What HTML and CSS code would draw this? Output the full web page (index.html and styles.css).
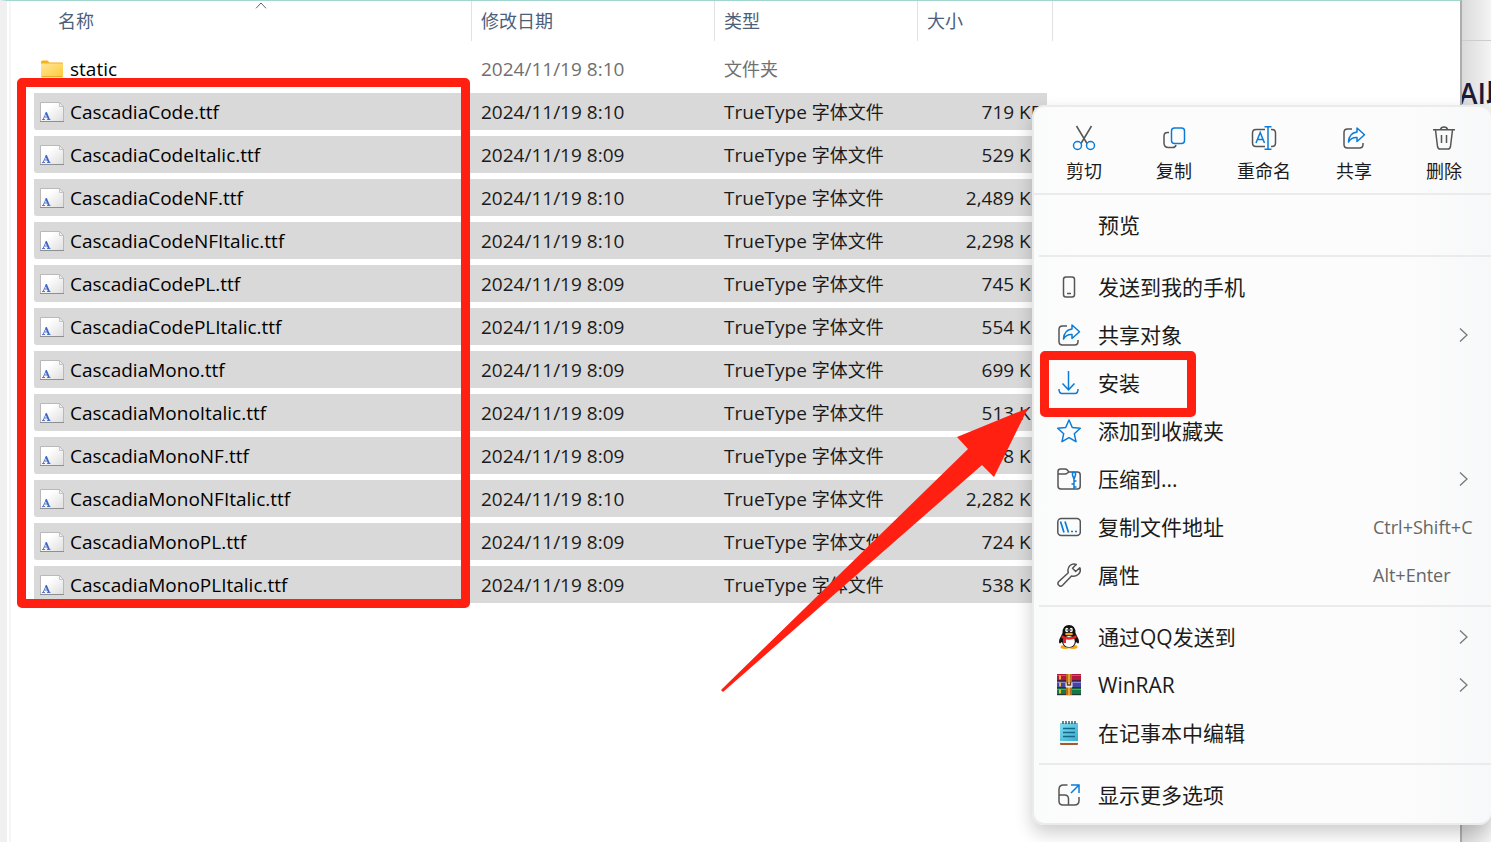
FILE: index.html
```
<!DOCTYPE html>
<html lang="zh-CN">
<head>
<meta charset="utf-8">
<title>CascadiaCode</title>
<link rel="stylesheet" href="styles.css">
</head>
<body>
<svg class="sprite" aria-hidden="true">
  <defs>
    <linearGradient id="page" x1="0" y1="0" x2="1" y2="1"><stop offset=".3" stop-color="#fff"/><stop offset="1" stop-color="#dedede"/></linearGradient>
    <linearGradient id="gold" x1="0" y1="0" x2="1" y2="1"><stop offset="0" stop-color="#ffe69a"/><stop offset="1" stop-color="#ffca3a"/></linearGradient>
    <linearGradient id="note" x1="0" y1="0" x2="1" y2="1"><stop offset="0" stop-color="#7fdcf0"/><stop offset="1" stop-color="#3bacc9"/></linearGradient>
  </defs>
  <symbol id="ttf" viewBox="0 0 24 20">
    <path d="M.5.5H19.500L23.500 4.500V19.500H.5Z" fill="url(#page)" stroke="#b9b9b9"/>
    <path d="M19.500.5V4.500H23.500Z" fill="#eee" stroke="#b9b9b9" stroke-width=".8"/>
    <path d="M0 19.500H24" stroke="#8f8f8f"/>
    <path d="M2 17.500H5M7 17.500H10.500M3.200 17.200L6.300 10.500M4.300 15H7.500" stroke="#5b7fd0" stroke-width="1" fill="none"/>
    <path d="M6 10.300L9 17.500" stroke="#3a62c4" stroke-width="1.800"/>
  </symbol>
  <symbol id="share" viewBox="0 0 24 24">
    <path d="M10 3H5.500Q2 3 2 6.500V18.500Q2 22 5.500 22H17.500Q21 22 21 18.500V17" fill="none" stroke="#555" stroke-width="1.500"/>
    <path d="M15 2L22.500 8.700L15 15.500V11.500Q9.500 11 6.500 16Q7 7 15 6Z" fill="none" stroke="#0a7bd8" stroke-width="1.500" stroke-linejoin="round"/>
  </symbol>
  <symbol id="chevron" viewBox="0 0 9 16"><path d="M1 1.500L8 8L1 14.500" fill="none" stroke="#777" stroke-width="1.300"/></symbol>
</svg>

<div class="desktop">
  <main class="explorer">
    <div class="listing">
      <table class="files">
        <colgroup><col class="c-name"><col class="c-date"><col class="c-type"><col class="c-size"><col class="c-end"></colgroup>
        <thead>
          <tr>
            <th><button class="head head-name" type="button">名称
              <svg class="sort" width="12" height="7" viewBox="0 0 12 7" aria-hidden="true"><path d="M1 6.300L6 1L11 6.300" fill="none" stroke="#666"/></svg>
            </button></th>
            <th><button class="head" type="button">修改日期</button></th>
            <th><button class="head" type="button">类型</button></th>
            <th colspan="2"><button class="head" type="button">大小</button></th>
          </tr>
        </thead>
        <tbody>
          <tr class="folder"><td><span class="file"><svg width="24" height="18" viewBox="0 0 24 18" aria-hidden="true"><path d="M1 2Q1 .5 2.500.5H7.500L9.500 2.500H22Q23 2.500 23 3.500V8H1Z" fill="#f4b21b"/><path d="M1 3.500H23V16Q23 17 22 17H2Q1 17 1 16Z" fill="url(#gold)"/><path d="M1.500 16.800H22.500" stroke="#dda018"/></svg>static</span></td><td>2024/11/19 8:10</td><td>文件夹</td><td></td><td></td></tr>
          <tr class="on"><td><span class="file"><svg width="24" height="20" aria-hidden="true"><use href="#ttf"/></svg>CascadiaCode.ttf</span></td><td>2024/11/19 8:10</td><td>TrueType <span class="cjk">字体文件</span></td><td class="size">719 KB</td><td></td></tr>
          <tr class="on"><td><span class="file"><svg width="24" height="20" aria-hidden="true"><use href="#ttf"/></svg>CascadiaCodeItalic.ttf</span></td><td>2024/11/19 8:09</td><td>TrueType <span class="cjk">字体文件</span></td><td class="size">529 KB</td><td></td></tr>
          <tr class="on"><td><span class="file"><svg width="24" height="20" aria-hidden="true"><use href="#ttf"/></svg>CascadiaCodeNF.ttf</span></td><td>2024/11/19 8:10</td><td>TrueType <span class="cjk">字体文件</span></td><td class="size">2,489 KB</td><td></td></tr>
          <tr class="on"><td><span class="file"><svg width="24" height="20" aria-hidden="true"><use href="#ttf"/></svg>CascadiaCodeNFItalic.ttf</span></td><td>2024/11/19 8:10</td><td>TrueType <span class="cjk">字体文件</span></td><td class="size">2,298 KB</td><td></td></tr>
          <tr class="on"><td><span class="file"><svg width="24" height="20" aria-hidden="true"><use href="#ttf"/></svg>CascadiaCodePL.ttf</span></td><td>2024/11/19 8:09</td><td>TrueType <span class="cjk">字体文件</span></td><td class="size">745 KB</td><td></td></tr>
          <tr class="on"><td><span class="file"><svg width="24" height="20" aria-hidden="true"><use href="#ttf"/></svg>CascadiaCodePLItalic.ttf</span></td><td>2024/11/19 8:09</td><td>TrueType <span class="cjk">字体文件</span></td><td class="size">554 KB</td><td></td></tr>
          <tr class="on"><td><span class="file"><svg width="24" height="20" aria-hidden="true"><use href="#ttf"/></svg>CascadiaMono.ttf</span></td><td>2024/11/19 8:09</td><td>TrueType <span class="cjk">字体文件</span></td><td class="size">699 KB</td><td></td></tr>
          <tr class="on"><td><span class="file"><svg width="24" height="20" aria-hidden="true"><use href="#ttf"/></svg>CascadiaMonoItalic.ttf</span></td><td>2024/11/19 8:09</td><td>TrueType <span class="cjk">字体文件</span></td><td class="size">513 KB</td><td></td></tr>
          <tr class="on"><td><span class="file"><svg width="24" height="20" aria-hidden="true"><use href="#ttf"/></svg>CascadiaMonoNF.ttf</span></td><td>2024/11/19 8:09</td><td>TrueType <span class="cjk">字体文件</span></td><td class="size">8 KB</td><td></td></tr>
          <tr class="on"><td><span class="file"><svg width="24" height="20" aria-hidden="true"><use href="#ttf"/></svg>CascadiaMonoNFItalic.ttf</span></td><td>2024/11/19 8:10</td><td>TrueType <span class="cjk">字体文件</span></td><td class="size">2,282 KB</td><td></td></tr>
          <tr class="on"><td><span class="file"><svg width="24" height="20" aria-hidden="true"><use href="#ttf"/></svg>CascadiaMonoPL.ttf</span></td><td>2024/11/19 8:09</td><td>TrueType <span class="cjk">字体文件</span></td><td class="size">724 KB</td><td></td></tr>
          <tr class="on"><td><span class="file"><svg width="24" height="20" aria-hidden="true"><use href="#ttf"/></svg>CascadiaMonoPLItalic.ttf</span></td><td>2024/11/19 8:09</td><td>TrueType <span class="cjk">字体文件</span></td><td class="size">538 KB</td><td></td></tr>
        </tbody>
      </table>
      <div class="mark mark-files"></div>
    </div>
  </main>
  <aside class="behind">
    <div class="behind-bar"></div>
    <div class="behind-title">AI助</div>
  </aside>

  <div class="menu">
    <div class="tools">
      <button class="tool" type="button"><svg width="24" height="26" viewBox="0 0 24 26" fill="none" stroke-width="1.500" aria-hidden="true"><path d="M4.500 1L15 18.500M19.500 1L9 18.500" stroke="#555"/><circle cx="5.500" cy="20.500" r="4" stroke="#0a7bd8"/><circle cx="18.500" cy="20.500" r="4" stroke="#0a7bd8"/></svg>剪切</button>
      <button class="tool" type="button"><svg width="24" height="26" viewBox="0 0 24 26" fill="none" stroke-width="1.500" aria-hidden="true"><path d="M7 7.500H5.500Q2 7.500 2 11V18Q2 22.500 6.500 22.500H10.500Q13.500 22.500 14 20" stroke="#555"/><rect x="9.500" y="3" width="13" height="15.500" rx="3" stroke="#0a7bd8"/></svg>复制</button>
      <button class="tool" type="button"><svg width="26" height="26" viewBox="0 0 26 26" fill="none" stroke-width="1.500" aria-hidden="true"><path d="M14 4.500H5Q1.500 4.500 1.500 8V18Q1.500 21.500 5 21.500H14M20 4.500H21Q24.500 4.500 24.500 8V18Q24.500 21.500 21 21.500H20" stroke="#555"/><path d="M5 18L9.200 7.500L13.500 18M6.500 14.500H12M17 2V24M13.500 1.800H20.500M13.500 24.200H20.500" stroke="#0a7bd8"/></svg>重命名</button>
      <button class="tool" type="button"><svg width="24" height="26" aria-hidden="true"><use href="#share"/></svg>共享</button>
      <button class="tool" type="button"><svg width="24" height="26" viewBox="0 0 24 26" fill="none" stroke="#555" stroke-width="1.500" aria-hidden="true"><path d="M1 4.800H23M3.500 5L5.500 21.500Q6 24 8 24H16Q18 24 18.500 21.500L20.500 5M8.500 4.500Q9 2 12 2T15.500 4.500M9.500 10V18M14.500 10V18"/></svg>删除</button>
    </div>
    <hr class="rule rule-tools">
    <button class="item" type="button"><span class="icon"></span><span class="label">预览</span></button>
    <hr class="rule">
    <button class="item" type="button"><svg class="icon" viewBox="0 0 24 24" fill="none" stroke="#555" stroke-width="1.500" aria-hidden="true"><rect x="6.500" y="2" width="11" height="20" rx="2.500"/><path d="M10 18.500H14"/></svg><span class="label">发送到我的手机</span></button>
    <button class="item" type="button"><svg class="icon" aria-hidden="true"><use href="#share"/></svg><span class="label">共享对象</span><svg class="more" width="9" height="16" aria-hidden="true"><use href="#chevron"/></svg></button>
    <button class="item" type="button"><svg class="icon" viewBox="0 0 24 24" fill="none" stroke="#0a7bd8" stroke-width="1.500" aria-hidden="true"><path d="M11.500 0V18.500M5.500 12.500L11.500 18.800L17.500 12.500M2 18Q2 22.500 5 22.500H18Q21 22.500 21 18"/></svg><span class="label">安装</span><span class="mark mark-install"></span></button>
    <button class="item" type="button"><svg class="icon" viewBox="0 0 24 24" fill="none" stroke="#0a7bd8" stroke-width="1.500" stroke-linejoin="round" aria-hidden="true"><path d="M12 1L15.300 8.500L23.300 9.300L17.300 14.700L19 22.700L12 18.600L5 22.700L6.700 14.700L.7 9.300L8.700 8.500Z"/></svg><span class="label">添加到收藏夹</span></button>
    <button class="item" type="button"><svg class="icon" viewBox="0 0 24 24" fill="none" stroke="#555" stroke-width="1.500" aria-hidden="true"><path d="M1 7V4.500Q1 2 3.500 2H8Q9.500 2 10.500 3.200L12 5H20.500Q23.200 5 23.200 8V19Q23.200 22 20.500 22H4Q1 22 1 19ZM1 7H8Q9.500 7 10.500 6L12 5"/><path d="M17 22V12M17 14H19.500M14.500 17H17M17 20H19.500M15.500 5.500V8L17 12L18.500 8V5.500Z" stroke="#0a7bd8"/></svg><span class="label">压缩到...</span><svg class="more" width="9" height="16" aria-hidden="true"><use href="#chevron"/></svg></button>
    <button class="item" type="button"><svg class="icon" viewBox="0 0 24 24" fill="none" stroke-width="1.500" aria-hidden="true"><rect x=".8" y="3.500" width="22.500" height="17" rx="3.500" stroke="#555"/><path d="M3.500 6.500L7 17.500M8 6.500L11.500 17.500M14 16.500H16M18 16.500H20" stroke="#0a7bd8" stroke-width="1.700"/></svg><span class="label">复制文件地址</span><span class="keys">Ctrl+Shift+C</span></button>
    <button class="item" type="button"><svg class="icon" viewBox="0 0 24 24" fill="none" stroke="#555" stroke-width="1.500" stroke-linejoin="round" aria-hidden="true"><path d="M19.300 1.500Q16 0 13 2.500Q10 5.500 11.300 9.700L1.800 18.500Q0 20.500 1.800 22.300Q3.700 24.200 5.600 22.300L14.500 12.900Q18.800 14 21.700 11Q24.300 8 22.800 4.700L18.700 8.500L15.500 5.300Z"/></svg><span class="label">属性</span><span class="keys">Alt+Enter</span></button>
    <hr class="rule">
    <button class="item" type="button"><svg class="icon" viewBox="0 0 24 24" aria-hidden="true"><ellipse cx="8" cy="22" rx="4.500" ry="1.900" fill="#f6a313"/><ellipse cx="16" cy="22" rx="4.500" ry="1.900" fill="#f6a313"/><path d="M12 0Q5.500 0 5.500 8L2.500 14Q1.300 18 3 18.500L5 17Q6 22.500 12 22.500T19 17L21 18.500Q22.700 18 21.500 14L18.500 8Q18.500 0 12 0Z" fill="#111"/><ellipse cx="12" cy="16.500" rx="5.800" ry="5.500" fill="#fff"/><path d="M4.500 10Q12 14.500 19.500 10V13Q12 16.500 4.500 13ZM6 13L9 14V18H6Z" fill="#ec2024"/><ellipse cx="9.800" cy="5" rx="1.600" ry="2.200" fill="#fff"/><ellipse cx="14.200" cy="5" rx="1.600" ry="2.200" fill="#fff"/><circle cx="10.200" cy="5" r=".7"/><circle cx="13.800" cy="5" r=".7"/><ellipse cx="12" cy="9" rx="4" ry="1.300" fill="#f6a313"/></svg><span class="label">通过QQ发送到</span><svg class="more" width="9" height="16" aria-hidden="true"><use href="#chevron"/></svg></button>
    <button class="item" type="button"><svg class="icon" viewBox="0 0 24 24" aria-hidden="true"><path d="M0 1H24V8H0Z" fill="#b3173e"/><path d="M0 8H24V15H0Z" fill="#4645a5"/><path d="M0 15H24V22H0Z" fill="#127a3e"/><path d="M0 2.500H24" stroke="#df4868"/><path d="M0 9.500H24" stroke="#8582dc"/><path d="M0 16.500H24" stroke="#3cae68"/><path d="M0 7.700H24M0 14.700H24M0 21.700H24" stroke="#29243b"/><path d="M3 2.500V6.500M3 9.500V13.500M3 16.500V20.500" stroke="#f6c42b" stroke-width="1.800"/><path d="M9 1H15V22H9Z" fill="#b96b1c"/><path d="M11 1H13V22H11Z" fill="#e9a23a"/><rect x="8.500" y="9.500" width="7" height="5" rx="1" fill="#eee"/><path d="M10.500 9V12H13.500V9" fill="none" stroke="#714016" stroke-width="1.500"/></svg><span class="label">WinRAR</span><svg class="more" width="9" height="16" aria-hidden="true"><use href="#chevron"/></svg></button>
    <button class="item" type="button"><svg class="icon" viewBox="0 0 24 24" aria-hidden="true"><path d="M3 20H21V23Q21 24 20 24H4Q3 24 3 23Z" fill="#a65a2b"/><path d="M3 19H21V22H3Z" fill="#eee"/><path d="M3 2H21V20H3Z" fill="url(#note)"/><path d="M6 0V3M9 0V3M12 0V3M15 0V3M18 0V3" stroke="#145b78" stroke-width="1.400"/><path d="M6 7.500H18M6 11.500H18M6 15.500H18" stroke="#12678a" stroke-width="1.600"/></svg><span class="label">在记事本中编辑</span></button>
    <hr class="rule">
    <button class="item" type="button"><svg class="icon" viewBox="0 0 24 24" fill="none" stroke="#555" stroke-width="1.500" aria-hidden="true"><path d="M10.500 2H6.500Q2 2 2 6.500V18Q2 22 6 22H17.500Q22 22 22 17.500V14M2 12H7.500Q11.500 12 11.500 16V22"/><path d="M14 2H22V10M22 2L14 10" stroke="#0a7bd8"/></svg><span class="label">显示更多选项</span></button>
  </div>

  <svg class="arrow" width="310" height="288" viewBox="0 0 310 288" aria-hidden="true"><path d="M308 2L237 31L248 43L1 284L3 286L262 59L274 71Z" fill="#ff2012"/></svg>
</div>
</body>
</html>
```
FILE: styles.css
```
* { box-sizing: border-box; }

body {
  margin: 0;
  font-family: "Open Sans", "Noto Sans CJK SC", sans-serif;
  font-size: 18px;
  line-height: 24px;
  color: #1b1b1b;
}

button {
  border: 0;
  margin: 0;
  padding: 0;
  background: none;
  font: inherit;
  color: inherit;
  text-align: left;
}

.sprite { position: absolute; width: 0; height: 0; }

.desktop {
  position: relative;
  display: flex;
  min-height: 100vh;
  overflow: hidden;
}

.explorer {
  flex: 1;
  border-top: 1px solid #a3d5cf;
  border-left: 7px solid #f0f0f0;
  border-right: 2px solid #adadad;
  background: #fff;
  padding-left: 2px;
}

.listing {
  position: relative;
  min-height: 100%;
  border-left: 2px solid #f6f6f6;
  padding-left: 23px;
}

.files {
  table-layout: fixed;
  width: 1019px;
  border-spacing: 0;
}

.c-name { width: 438px; }
.c-date { width: 243px; }
.c-type { width: 203px; }
.c-size { width: 129px; }
.c-end { width: 6px; }

th { height: 43px; padding: 0; vertical-align: top; font-weight: 400; }

.head {
  position: relative;
  display: block;
  width: 100%;
  height: 40px;
  padding-left: 9px;
  border-right: 1px solid #e2e2e2;
  color: #4c607a;
}

.head-name { padding-left: 24px; }
.sort { position: absolute; top: 1px; left: 50%; margin-left: 2px; }

td {
  height: 43px;
  padding: 0 0 0 9px;
  border-top: 6px solid transparent;
  background-clip: padding-box;
  font-size: 19px;
  white-space: nowrap;
}

td:first-child { padding-left: 6px; color: #000; }
td:last-child { padding: 0; }

.cjk, .folder td:nth-child(3) { font-size: 18px; }
.folder td { color: #707070; }
.folder td:first-child { color: #000; }
.on td:not(:last-child) { background-color: #d9d9d9; }
.on td:nth-child(4) { border-radius: 0 2px 2px 0; }
.on td:first-child { border-radius: 2px 0 0 2px; }
.on .size { padding-right: 4px; text-align: right; }

.file { display: flex; align-items: center; gap: 6px; }

.mark {
  position: absolute;
  border: 9px solid #ff2012;
  border-radius: 5px;
  pointer-events: none;
}

.mark-files { left: 6px; top: 77px; width: 453px; height: 530px; }
.mark-install { left: 6px; top: -8px; width: 156px; height: 66px; }

.behind {
  width: 29px;
  overflow: hidden;
  white-space: nowrap;
  background: linear-gradient(90deg, #dadada, #f4f4f4);
}

.behind-bar { height: 41px; border-bottom: 1px solid #cdcdcd; }

.behind-title {
  margin: 32px 0 0 -3px;
  font-size: 28px;
  line-height: 40px;
  font-weight: 600;
  color: #1b1b3c;
}

.menu {
  position: absolute;
  top: 105px;
  left: 1032px;
  right: 0;
  padding-bottom: 4px;
  border: 2px solid #ebebeb;
  border-right: 0;
  border-radius: 12px;
  background: linear-gradient(90deg, #fafbfb, #fcfcfc 10%, #fcfcfc 80%, #f7f8f9);
  box-shadow: 0 8px 18px rgba(0, 0, 0, .2);
}

.tools {
  display: grid;
  grid-template-columns: repeat(5, 1fr);
  height: 86px;
  padding: 18px 2px 0 5px;
}

.tool {
  display: flex;
  flex-direction: column;
  align-items: center;
  gap: 8px;
}

.rule {
  height: 2px;
  margin: 6px 0 6px 5px;
  border: 0;
  background: #ebebeb;
}

.rule-tools { margin-top: 0; margin-left: 0; }

.item {
  position: relative;
  display: flex;
  align-items: center;
  gap: 17px;
  width: 100%;
  height: 48px;
  padding: 0 18px 0 23px;
  font-size: 21px;
}

.icon { flex: none; width: 24px; height: 24px; }
.label { flex: 1; white-space: nowrap; }
.more { margin-right: 5px; }
.keys { width: 100px; font-size: 18px; color: #666; white-space: nowrap; }

.arrow { position: absolute; left: 720px; top: 406px; pointer-events: none; }
```
